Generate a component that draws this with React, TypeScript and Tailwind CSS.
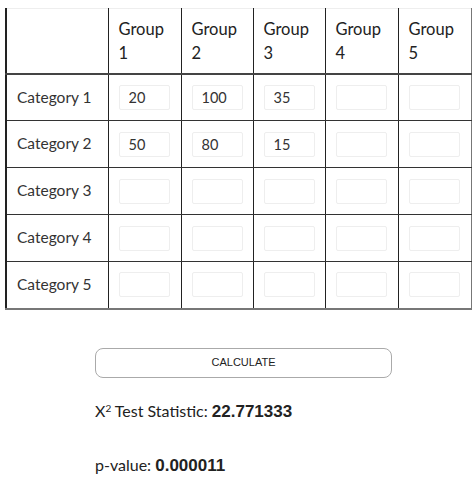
import React from "react";

const groups = ["1", "2", "3", "4", "5"];
const data: string[][] = [
  ["20", "100", "35", "", ""],
  ["50", "80", "15", "", ""],
  ["", "", "", "", ""],
  ["", "", "", "", ""],
  ["", "", "", "", ""],
];

export default function App() {
  return (
    <div className="bg-white w-[474px] h-[477px] pt-2 text-[#222]" style={{ fontFamily: "Lato, 'Open Sans', sans-serif" }}>
      <table className="ml-[5px] w-[465px] table-fixed border-collapse">
        <colgroup>
          <col className="w-[102px]" />
          <col className="w-[73px]" />
          <col className="w-[72px]" />
          <col className="w-[72px]" />
          <col className="w-[73px]" />
          <col className="w-[73px]" />
        </colgroup>
        <thead>
          <tr className="h-[65px]">
            <th className="border-t border-t-[#eee] border-l-2 border-l-[#222] border-r-[1.5px] border-r-[#222] border-b-2 border-b-[#444]" />
            {groups.map((g, i) => (
              <th
                key={g}
                className={`border-t border-t-[#eee] border-b-2 border-b-[#444] border-r-[1.5px] ${i === 4 ? "border-r-[#777]" : "border-r-[#222]"} px-[10px] text-left align-middle text-[16.5px] font-normal leading-[24px]`}
              >
                <span className="block">Group</span>
                <span className="block">{g}</span>
              </th>
            ))}
          </tr>
        </thead>
        <tbody>
          {data.map((row, r) => (
            <tr key={r} className="h-[47px]">
              <td
                className={`border-l-2 border-l-[#222] border-r-[1.5px] border-r-[#222] ${r === 4 ? "border-b-2 border-b-[#777]" : "border-b-[1.5px] border-b-[#333]"} pl-[10px] text-[15.5px] text-[#333] whitespace-nowrap`}
              >
                Category {r + 1}
              </td>
              {row.map((v, c) => (
                <td
                  key={c}
                  className={`border-r-[1.5px] ${c === 4 ? "border-r-[#777]" : "border-r-[#222]"} ${r === 4 ? "border-b-2 border-b-[#777]" : "border-b-[1.5px] border-b-[#333]"} px-[10px]`}
                >
                  <input
                    defaultValue={v}
                    className="block w-[51px] h-[25px] border border-[#eee] rounded-[2px] px-[9px] text-[14.5px] text-[#333] outline-none"
                  />
                </td>
              ))}
            </tr>
          ))}
        </tbody>
      </table>

      <div className="ml-[95px] mt-[38px]">
        <button
          className="w-[297px] h-[30px] border border-[#aaa] rounded-[8px] bg-white text-[11px] text-[#222]"
          style={{ fontFamily: "'Liberation Sans', Arial, sans-serif" }}
        >
          CALCULATE
        </button>
        <p className="mt-[23px] text-[16px] leading-[20px]">
          X<sup className="text-[10px]">2</sup> Test Statistic:{" "}
          <b className="text-[17px]" style={{ fontFamily: "'Liberation Sans', Arial, sans-serif" }}>22.771333</b>
        </p>
        <p className="mt-[33px] text-[16px] leading-[20px]">
          p-value:{" "}
          <b className="text-[17px]" style={{ fontFamily: "'Liberation Sans', Arial, sans-serif" }}>0.000011</b>
        </p>
      </div>
    </div>
  );
}
